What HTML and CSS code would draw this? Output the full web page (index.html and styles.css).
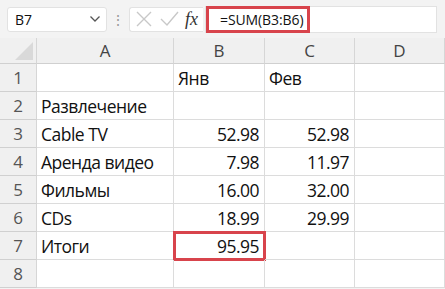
FILE: index.html
```html
<!DOCTYPE html>
<html lang="ru">
<head>
    <meta charset="UTF-8">
    <title>Итоги</title>
    <link rel="stylesheet" href="styles.css">
</head>
<body>
    <div class="formula-bar">
        <div class="name-box">
            <span>B7</span>
            <svg class="chevron" width="12" height="8" viewBox="0 0 12 8"><path d="M1.5 1.5 L6 6 L10.5 1.5" fill="none" stroke="#555" stroke-width="1.3"/></svg>
        </div>
        <div class="dots">⋮</div>
        <div class="buttons">
            <svg width="18" height="18" viewBox="0 0 18 18"><path d="M2 2 L16 16 M16 2 L2 16" stroke="#c8c8c8" stroke-width="1.4"/></svg>
            <svg width="20" height="18" viewBox="0 0 20 18"><path d="M2 9 L8 15 L19 2" fill="none" stroke="#c8c8c8" stroke-width="1.4"/></svg>
            <span class="fx">fx</span>
        </div>
        <div class="formula">
            <span class="formula-text">=SUM(B3:B6)</span>
        </div>
    </div>

    <div class="sheet">
        <div class="corner"><span class="triangle"></span></div>
        <div class="col-head">A</div>
        <div class="col-head">B</div>
        <div class="col-head">C</div>
        <div class="col-head">D</div>

        <div class="row-head">1</div>
        <div class="cell"></div>
        <div class="cell">Янв</div>
        <div class="cell">Фев</div>
        <div class="cell"></div>

        <div class="row-head">2</div>
        <div class="cell">Развлечение</div>
        <div class="cell"></div>
        <div class="cell"></div>
        <div class="cell"></div>

        <div class="row-head">3</div>
        <div class="cell">Cable TV</div>
        <div class="cell num">52.98</div>
        <div class="cell num">52.98</div>
        <div class="cell"></div>

        <div class="row-head">4</div>
        <div class="cell">Аренда видео</div>
        <div class="cell num">7.98</div>
        <div class="cell num">11.97</div>
        <div class="cell"></div>

        <div class="row-head">5</div>
        <div class="cell">Фильмы</div>
        <div class="cell num">16.00</div>
        <div class="cell num">32.00</div>
        <div class="cell"></div>

        <div class="row-head">6</div>
        <div class="cell">CDs</div>
        <div class="cell num">18.99</div>
        <div class="cell num">29.99</div>
        <div class="cell"></div>

        <div class="row-head">7</div>
        <div class="cell">Итоги</div>
        <div class="cell num selected">95.95</div>
        <div class="cell"></div>
        <div class="cell"></div>

        <div class="row-head">8</div>
        <div class="cell"></div>
        <div class="cell"></div>
        <div class="cell"></div>
        <div class="cell"></div>
    </div>
</body>
</html>
```

FILE: styles.css
```css
* {
    margin: 0;
    padding: 0;
    box-sizing: border-box;
}

body {
    font-family: 'Open Sans', 'Noto Sans', sans-serif;
    background: #f3f3f3;
    color: #111;
    width: 445px;
    height: 289px;
    overflow: hidden;
}

/* formula bar */
.formula-bar {
    display: flex;
    align-items: center;
    height: 38px;
    padding: 4px 0 4px 7px;
}

.name-box {
    display: flex;
    align-items: center;
    justify-content: space-between;
    width: 100px;
    height: 25px;
    padding: 0 5px 0 7px;
    background: #fff;
    border: 1px solid #e2e2e2;
    border-radius: 3px;
    font-size: 14px;
}

.dots {
    width: 22px;
    text-align: center;
    color: #999;
    font-size: 14px;
}

.buttons {
    display: flex;
    align-items: center;
    gap: 6px;
    width: 74px;
    height: 25px;
    padding-left: 5px;
    background: #fff;
    border: 1px solid #e2e2e2;
    border-right: none;
    border-radius: 3px 0 0 3px;
}

.fx {
    font-family: 'Liberation Serif', serif;
    font-style: italic;
    font-size: 18px;
    color: #333;
}

.formula {
    flex: 1;
    display: flex;
    align-items: center;
    height: 27px;
    margin-left: 2px;
    margin-right: 8px;
    background: #fff;
    border: 1px solid #e2e2e2;
}

.formula-text {
    display: flex;
    align-items: center;
    width: 104px;
    height: 27px;
    padding-left: 11px;
    border: 3px solid #d8444c;
    font-size: 14px;
    letter-spacing: -0.1px;
}

/* sheet grid */
.sheet {
    display: grid;
    grid-template-columns: 37px 137px 91px 90px 1fr;
    grid-template-rows: 26px repeat(8, 28px);
    background: #fff;
}

.corner,
.col-head,
.row-head {
    background: #f0f0f0;
    color: #444;
    border-right: 1px solid #d6d6d6;
    border-bottom: 1px solid #d0d0d0;
}

.corner {
    position: relative;
}

.triangle {
    position: absolute;
    right: 3px;
    bottom: 3px;
    width: 0;
    height: 0;
    border-left: 18px solid transparent;
    border-bottom: 18px solid #d9d9d9;
}

.col-head {
    display: flex;
    align-items: center;
    justify-content: center;
    font-size: 17px;
}

.row-head {
    display: flex;
    align-items: center;
    justify-content: center;
    font-size: 17px;
    color: #555;
}

.cell {
    display: flex;
    align-items: center;
    padding: 0 4px;
    font-size: 17.5px;
    letter-spacing: -0.5px;
    border-right: 1px solid #dcdcdc;
    border-bottom: 1px solid #dcdcdc;
    white-space: nowrap;
}

.num {
    justify-content: flex-end;
    padding-right: 5px;
}

.selected {
    outline: 3px solid #d8444c;
    outline-offset: -2px;
}
```
